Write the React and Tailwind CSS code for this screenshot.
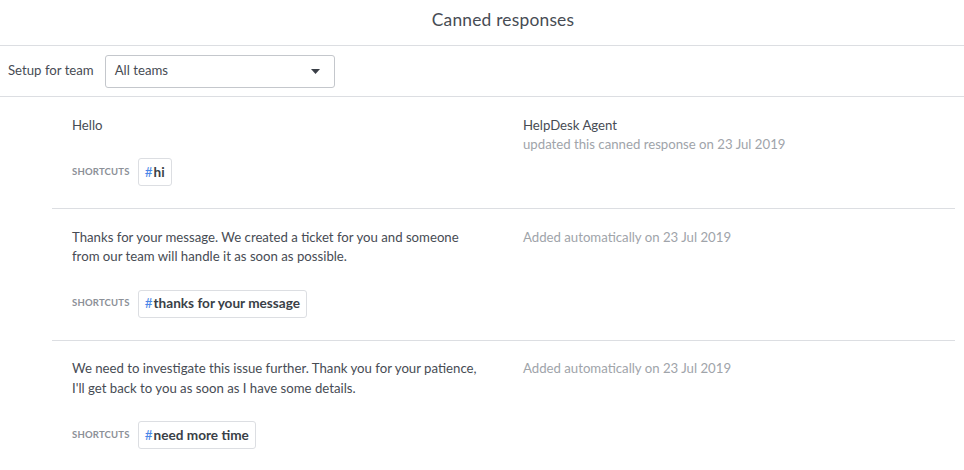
import React from 'react';

const responses = [
  {
    id: 1,
    text: ['Hello'],
    shortcut: 'hi',
    author: 'HelpDesk Agent',
    meta: 'updated this canned response on 23 Jul 2019',
  },
  {
    id: 2,
    text: [
      'Thanks for your message. We created a ticket for you and someone',
      'from our team will handle it as soon as possible.',
    ],
    shortcut: 'thanks for your message',
    meta: 'Added automatically on 23 Jul 2019',
  },
  {
    id: 3,
    text: [
      'We need to investigate this issue further. Thank you for your patience,',
      "I'll get back to you as soon as I have some details.",
    ],
    shortcut: 'need more time',
    meta: 'Added automatically on 23 Jul 2019',
  },
];

function ResponseRow({ item, last }) {
  return (
    <div className={`flex pt-[18.5px] pb-[22px] ${last ? '' : 'border-b border-[#dcdee2]'}`}>
      <div className="w-[471px] pl-5">
        <div className="text-[13.2px] leading-[19.5px] text-[#474c54]">
          {item.text.map((line, i) => (
            <div key={i}>{line}</div>
          ))}
        </div>
        <div className="mt-[23px] flex items-center gap-2">
          <span className="text-[9.5px] font-bold uppercase tracking-[0.2px] text-[#8c9097]">Shortcuts</span>
          <span className="flex h-[28px] items-center rounded-[3px] border border-[#dcdee2] px-[6px] text-[13.6px] font-bold text-[#3a3f47]">
            <span className="mr-[1px] font-normal text-[#4a86e8]">#</span>
            {item.shortcut}
          </span>
        </div>
      </div>
      <div className="text-[13.2px] leading-[19.5px]">
        {item.author && <div className="text-[#474c54]">{item.author}</div>}
        <div className="text-[#a0a4aa]">{item.meta}</div>
      </div>
    </div>
  );
}

export default function App() {
  return (
    <div className="h-[470px] w-[964px] overflow-hidden bg-white" style={{ fontFamily: 'Lato, "Open Sans", sans-serif' }}>
      {/* header */}
      <div className="flex h-[46px] items-center justify-center border-b border-[#dcdee2] pb-[4px] pl-[42px]">
        <h1 className="text-[17.4px] tracking-[0.2px] text-[#474c54]">Canned responses</h1>
      </div>

      {/* team filter */}
      <div className="flex h-[51px] items-center gap-[11px] border-b border-[#dcdee2] pl-2">
        <span className="text-[13.2px] text-[#474c54]">Setup for team</span>
        <div className="flex h-[33px] w-[230px] items-center justify-between rounded-[3px] border border-[#c4c7cc] pl-[9px] pr-[14px]">
          <span className="text-[13.2px] text-[#474c54]">All teams</span>
          <svg width="9" height="5" viewBox="0 0 9 5">
            <path d="M0 0h9L4.5 5z" fill="#3a3f47" />
          </svg>
        </div>
      </div>

      {/* list */}
      <div className="ml-[52px] mr-[9px]">
        {responses.map((r, i) => (
          <ResponseRow key={r.id} item={r} last={i === responses.length - 1} />
        ))}
      </div>
    </div>
  );
}
